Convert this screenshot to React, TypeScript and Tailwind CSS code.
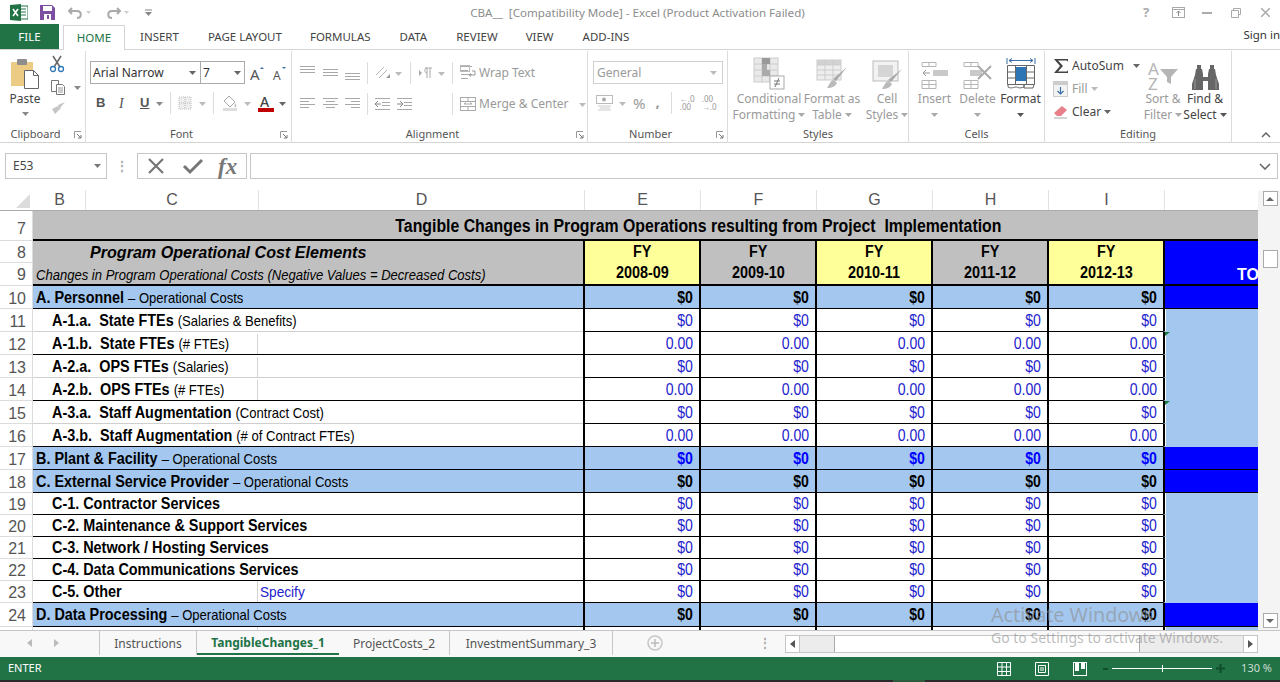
import React from "react";

const ui = "font-['Noto_Sans','Open_Sans',sans-serif]";
const cell = "font-['Liberation_Sans',sans-serif]";

const Caret = ({ c = "#8a8a8a" }: { c?: string }) => (
  <svg width="7" height="4" viewBox="0 0 7 4" className="inline-block shrink-0"><path d="M0 0h7L3.5 4z" fill={c} /></svg>
);
const Launcher = () => (
  <svg width="8" height="8" viewBox="0 0 8 8" className="shrink-0"><path d="M.5 7V.5H7" stroke="#999" fill="none" /><path d="M3 3l4 4M4 7h3V4" stroke="#777" fill="none" /></svg>
);
const Sep = ({ h = "h-[22px]" }: { h?: string }) => <div className={`w-px bg-[#dcdcdc] shrink-0 ${h}`} />;

const Lines = ({ w = 15, rows, c = "#a8a8a8" }: { w?: number; rows: [number, number, number][]; c?: string }) => (
  <svg width={w} height="18" viewBox={`0 0 ${w} 18`} className="shrink-0">
    {rows.map(([x, y, l], i) => <rect key={i} x={x} y={y} width={l} height="1" fill={c} />)}
  </svg>
);

const Group = ({ w, label, launcher, children, border = true }: { w: string; label: string; launcher?: boolean; children: React.ReactNode; border?: boolean }) => (
  <div className={`${w} shrink-0 h-[92px] flex flex-col ${border ? "border-r border-[#dcdcdc]" : ""}`}>
    <div className="h-[75px] flex">{children}</div>
    <div className={`h-[17px] flex items-center relative ${launcher ? "pr-[14px]" : ""}`}>
      <span className="w-full text-center text-[11px] text-[#555]">{label}</span>
      {launcher && <span className="absolute right-[3px] top-[5px]"><Launcher /></span>}
    </div>
  </div>
);

const BigBtn = ({ w, icon, l1, l2, dark }: { w: string; icon: React.ReactNode; l1: string; l2?: string; dark?: boolean }) => (
  <div className={`${w} flex flex-col items-center text-[12px] leading-[16px] ${dark ? "text-[#444]" : "text-[#9a9a9a]"}`}>
    <div className="h-[40px] flex items-end justify-center pb-[1px]">{icon}</div>
    <div className="whitespace-nowrap">{l1}</div>
    {l2 ? <div className="whitespace-nowrap flex items-center gap-[3px]">{l2}<Caret c={dark ? "#555" : "#aaa"} /></div> : <div className="h-[16px] flex items-center"><Caret c={dark ? "#555" : "#aaa"} /></div>}
  </div>
);

const CondIcon = () => (
  <svg width="32" height="33" viewBox="0 0 32 33">
    <rect x="1" y="1" width="24" height="24" fill="#e9e9e9" stroke="#ccc" />
    <path d="M9 1v24M17 1v24M1 7h24M1 13h24M1 19h24" stroke="#ccc" />
    <rect x="9" y="1" width="8" height="6" fill="#999" /><rect x="9" y="7" width="5" height="6" fill="#aaa" /><rect x="9" y="13" width="8" height="6" fill="#aaa" />
    <rect x="17" y="19" width="14" height="13" fill="#fff" stroke="#aaa" />
    <path d="M21 24h6M21 27h6M26 21l-4 9" stroke="#777" fill="none" />
  </svg>
);
const TableIcon = () => (
  <svg width="32" height="31" viewBox="0 0 32 31">
    <rect x="1" y="1" width="24" height="20" fill="#eee" stroke="#ccc" />
    <rect x="1" y="1" width="24" height="5" fill="#d2d2d2" />
    <path d="M9 1v20M17 1v20M1 6h24M1 11h24M1 16h24" stroke="#ccc" />
    <path d="M31 8L20 22l-3-2z" fill="#aaa" /><path d="M18 21c-3 0-4 3-7 8 5 0 9-2 10-5z" fill="#bbb" />
  </svg>
);
const StylesIcon = () => (
  <svg width="31" height="30" viewBox="0 0 31 30">
    <rect x="1" y="1" width="25" height="20" fill="#f2f2f2" stroke="#bbb" />
    <rect x="6" y="5" width="15" height="12" fill="#d5d5d5" />
    <path d="M30 9L19 22l-3-2z" fill="#aaa" /><path d="M17 21c-3 0-4 3-7 8 5 0 9-2 10-5z" fill="#bbb" />
  </svg>
);
const InsertIcon = () => (
  <svg width="28" height="29" viewBox="0 0 28 29" fill="none">
    <path d="M1 1.500h14v4H1zM8 1.500v4M1 19.500h14v8H1zM1 23.500h14M8 19.500v8" stroke="#b5b5b5" />
    <rect x="12" y="9" width="15" height="6" fill="#c9c9c9" />
    <path d="M9 12H2M5 9l-3 3 3 3" stroke="#999" />
  </svg>
);
const DeleteIcon = () => (
  <svg width="30" height="29" viewBox="0 0 30 29" fill="none">
    <path d="M1 1.500h14v4H1zM8 1.500v4M1 19.500h14v8H1zM1 23.500h14M8 19.500v8" stroke="#b5b5b5" />
    <rect x="7" y="9" width="12" height="6" fill="#c9c9c9" />
    <path d="M15 5l13 13M28 5L15 18" stroke="#aaa" strokeWidth="2" />
  </svg>
);
const FormatIcon = () => (
  <svg width="30" height="33" viewBox="0 0 30 33" fill="none">
    <path d="M1 1v6M29 1v6M3 3.500h24M3 3.500l3-2M3 3.500l3 2M27 3.500l-3-2M27 3.500l-3 2" stroke="#3b6fa5" />
    <path d="M1.500 8.500h27v19h-27zM1.500 15h27M1.500 21h27M9.500 8.500v19M20.500 8.500v19" stroke="#666" />
    <rect x="10" y="10" width="10" height="14" fill="#2e75b6" />
    <path d="M2 27v3c3 2 6 0 8 0s3 2 8 0v-3M18 28v3h9l1-4" stroke="#666" />
  </svg>
);
const Binoculars = () => (
  <svg width="27" height="25" viewBox="0 0 27 25">
    <path d="M5 0h4v4h1l1 5v3h5V9l1-5h1V0h4v4h1l1 6 3 9v6H16v-9h-5v9H0v-6l3-9 1-6h1z" fill="#666" />
    <path d="M3 14v10M24 14v10" stroke="#999" />
  </svg>
);

const Ribbon = () => (
  <div className={`h-[93px] flex border-b border-[#d4d4d4] pt-[1px] text-[12px] bg-white relative shrink-0 ${ui}`}>
    <Group w="w-[86px]" label="Clipboard" launcher>
      <div className="w-[50px] flex flex-col items-center pt-[6px] text-[12px] text-[#444]">
        <svg width="30" height="33" viewBox="0 0 30 33">
          <path d="M1 5h22v24H1z" fill="#eccb85" /><rect x="7" y="2" width="10" height="6" rx="1" fill="#8e8e8e" />
          <path d="M14.500 13.500h9l5 5v13h-14z" fill="#fff" stroke="#666" /><path d="M23.500 13.500v5h5" fill="none" stroke="#666" />
        </svg>
        <div className="leading-[16px] mt-[1px]">Paste</div>
        <div className="h-[14px] flex items-center"><Caret /></div>
      </div>
      <div className="flex flex-col pt-[4px] gap-[4px]">
        <svg width="16" height="18" viewBox="0 0 16 18" fill="none" className="ml-[-1px]"><path d="M4 1l7 11M12 1L5 12" stroke="#666" strokeWidth="1.500" /><circle cx="4" cy="14" r="2.500" stroke="#2e75b6" strokeWidth="1.300" /><circle cx="12" cy="14" r="2.500" stroke="#2e75b6" strokeWidth="1.300" /></svg>
        <div className="flex items-center gap-[8px] mt-[2px]">
          <svg width="16" height="17" viewBox="0 0 16 17" fill="none"><path d="M1.500 1.500h7v11h-7z" stroke="#777" /><path d="M6.500 5.500h6l2 2v8h-8z" fill="#fff" stroke="#777" /><path d="M8 9h5M8 11h5M8 13h5" stroke="#999" /></svg>
          <Caret />
        </div>
        <svg width="16" height="14" viewBox="0 0 16 14" className="mt-[1px]"><path d="M15 1L8 4l2 3zM8 5L2 8l3 5 6-6z" fill="#c6c6c6" /></svg>
      </div>
    </Group>

    <Group w="w-[206px]" label="Font" launcher>
      <div className="flex flex-col pl-[4px]">
        <div className="flex items-center mt-[10px] h-[23px]">
          <div className="w-[111px] h-[23px] border border-[#ababab] flex items-center justify-between pl-[2px] pr-[4px] text-[#333] text-[12px]"><span>Arial Narrow</span><Caret c="#666" /></div>
          <div className="w-[44px] h-[23px] border border-[#ababab] border-l-0 flex items-center justify-between pl-[2px] pr-[3px] text-[#333] text-[12px]"><span>7</span><Caret c="#666" /></div>
          <svg width="16" height="16" viewBox="0 0 16 16" className="ml-[5px]"><text x="0" y="15" fontSize="15" fill="#555">A</text><path d="M10 4l2-2 2 2z" fill="#3b6fa5" /></svg>
          <svg width="16" height="16" viewBox="0 0 16 16" className="ml-[6px]"><text x="1" y="15" fontSize="12" fill="#555">A</text><path d="M10 2l2 2 2-2z" fill="#3b6fa5" /></svg>
        </div>
        <div className="flex items-center mt-[8px] h-[22px] text-[#555]">
          <span className="w-[12px] ml-[6px] text-[13px] font-bold font-['Liberation_Sans']">B</span>
          <span className="w-[12px] ml-[11px] text-[14px] italic font-['Liberation_Serif']">I</span>
          <span className="w-[12px] ml-[9px] text-[13px] font-bold underline font-['Liberation_Sans']">U</span>
          <span className="ml-[4px]"><Caret /></span>
          <span className="ml-[7px]"><Sep /></span>
          <svg width="14" height="14" viewBox="0 0 14 14" className="ml-[7px]"><rect x="1" y="1" width="12" height="12" fill="#eee" stroke="#bbb" strokeDasharray="1 1" /><path d="M7 1v12M1 7h12" stroke="#bbb" strokeDasharray="1 1" /></svg>
          <span className="ml-[7px]"><Caret c="#bbb" /></span>
          <span className="ml-[7px]"><Sep /></span>
          <svg width="16" height="17" viewBox="0 0 16 17" className="ml-[8px]" fill="none"><path d="M7 1l6 6-5 5-6-6z" stroke="#aaa" /><path d="M13 8c1 2 2 3 1 4s-2-1-1-4z" fill="#bbb" /><rect x="1" y="13" width="14" height="3" fill="#ddd" /></svg>
          <span className="ml-[6px]"><Caret c="#bbb" /></span>
          <svg width="16" height="17" viewBox="0 0 16 17" className="ml-[7px]"><text x="2" y="12" fontSize="14" fill="#444" fontWeight="500">A</text><rect x="0" y="13" width="16" height="4" fill="#c00000" /></svg>
          <span className="ml-[5px]"><Caret c="#666" /></span>
        </div>
      </div>
    </Group>

    <Group w="w-[296px]" label="Alignment" launcher>
      <div className="flex flex-col pl-[8px] text-[#9a9a9a]">
        <div className="flex items-center mt-[11px] h-[22px]">
          <Lines rows={[[0, 2, 15], [0, 5, 15], [0, 8, 15]]} />
          <span className="ml-[8px]"><Lines rows={[[0, 5, 15], [0, 8, 15], [0, 11, 15]]} /></span>
          <span className="ml-[7px]"><Lines rows={[[0, 9, 15], [0, 12, 15], [0, 15, 15]]} /></span>
          <span className="ml-[7px]"><Sep /></span>
          <svg width="16" height="16" viewBox="0 0 16 16" className="ml-[7px]" fill="none"><path d="M1 10L9 2M4 13l8-8" stroke="#b5b5b5" /><path d="M11 13l4-4v4z" fill="#999" /></svg>
          <span className="ml-[4px]"><Caret c="#bbb" /></span>
          <span className="ml-[8px]"><Sep /></span>
          <svg width="14" height="14" viewBox="0 0 14 14" className="ml-[8px]"><path d="M0 4l3 3-3 3z" fill="#aaa" /><path d="M6 2h7M8 2c-3 0-3 5 0 5M8 2v10M11 2v10" stroke="#aaa" fill="none" /></svg>
          <span className="ml-[5px]"><Caret c="#bbb" /></span>
          <span className="ml-[7px]"><Sep /></span>
          <svg width="16" height="16" viewBox="0 0 16 16" className="ml-[7px]" fill="none"><path d="M1 1.500h11M1 5.500h7M1 9.500h11M1 13.500h7" stroke="#aaa" /><rect x=".5" y=".5" width="9" height="6" stroke="#bbb" /><path d="M12 6h3v4h-5M11 8.500l-2 1.500 2 1.500" stroke="#999" /></svg>
          <span className="ml-[3px] text-[12px]">Wrap Text</span>
        </div>
        <div className="flex items-center mt-[9px] h-[22px]">
          <Lines rows={[[0, 3, 15], [0, 6, 9], [0, 9, 15], [0, 12, 9]]} />
          <span className="ml-[8px]"><Lines rows={[[0, 3, 15], [3, 6, 9], [0, 9, 15], [3, 12, 9]]} /></span>
          <span className="ml-[7px]"><Lines rows={[[0, 3, 15], [6, 6, 9], [0, 9, 15], [6, 12, 9]]} /></span>
          <span className="ml-[7px]"><Sep /></span>
          <svg width="15" height="14" viewBox="0 0 15 14" className="ml-[7px]" fill="none"><path d="M0 1.500h15M7 5.500h8M7 8.500h8M0 12.500h15" stroke="#aaa" /><path d="M6 7H0M3 4L0 7l3 3" stroke="#888" /></svg>
          <svg width="15" height="14" viewBox="0 0 15 14" className="ml-[7px]" fill="none"><path d="M0 1.500h15M7 5.500h8M7 8.500h8M0 12.500h15" stroke="#aaa" /><path d="M0 7h6M3 4l3 3-3 3" stroke="#888" /></svg>
          <span className="ml-[40px]"><Sep /></span>
          <svg width="16" height="14" viewBox="0 0 16 14" className="ml-[7px]" fill="none"><rect x=".5" y=".5" width="15" height="13" stroke="#aaa" /><path d="M.5 4.500h15M.5 9.500h15M8 .5v4M8 9.500v4M4 7h8M4 7l2-1.500M12 7l-2-1.500" stroke="#aaa" /></svg>
          <span className="ml-[3px] text-[12px] whitespace-nowrap">Merge &amp; Center</span>
          <span className="ml-[10px]"><Caret c="#bbb" /></span>
        </div>
      </div>
    </Group>

    <Group w="w-[140px]" label="Number" launcher>
      <div className="flex flex-col pl-[5px] text-[#9a9a9a]">
        <div className="w-[130px] h-[23px] mt-[10px] border border-[#d0d0d0] flex items-center justify-between pl-[3px] pr-[5px] text-[12px]"><span>General</span><Caret c="#bbb" /></div>
        <div className="flex items-center h-[22px] mt-[8px]">
          <svg width="18" height="16" viewBox="0 0 18 16" className="ml-[3px]" fill="none"><rect x=".5" y=".5" width="16" height="8" stroke="#bbb" /><circle cx="8" cy="4.500" r="2" fill="#aaa" /><path d="M2 11h13M4 13h10M2 15h13" stroke="#ccc" /></svg>
          <span className="ml-[5px]"><Caret c="#bbb" /></span>
          <span className="ml-[7px] text-[15px] leading-none">%</span>
          <span className="ml-[10px] text-[15px] font-bold leading-none mt-[-4px]">,</span>
          <span className="ml-[11px]"><Sep /></span>
          <span className="ml-[8px] text-[8px] leading-[8px] w-[17px] text-[#999]">←.0<br />.00</span>
          <span className="ml-[5px] text-[8px] leading-[8px] w-[17px] text-[#999]">.00<br />→.0</span>
        </div>
      </div>
    </Group>

    <Group w="w-[181px]" label="Styles">
      <div className="w-[12px]" />
      <BigBtn w="w-[58px]" icon={<CondIcon />} l1="Conditional" l2="Formatting" />
      <BigBtn w="w-[68px]" icon={<TableIcon />} l1="Format as" l2="Table" />
      <BigBtn w="w-[42px]" icon={<StylesIcon />} l1="Cell" l2="Styles" />
    </Group>

    <Group w="w-[136px]" label="Cells">
      <div className="w-[4px]" />
      <BigBtn w="w-[43px]" icon={<InsertIcon />} l1="Insert" />
      <BigBtn w="w-[43px]" icon={<DeleteIcon />} l1="Delete" />
      <BigBtn w="w-[43px]" icon={<FormatIcon />} l1="Format" dark />
    </Group>

    <Group w="w-[187px]" label="Editing">
      <div className="w-[100px] flex flex-col pl-[8px] pt-[3px] text-[12px]">
        <div className="h-[23px] flex items-center text-[#444]">
          <svg width="16" height="16" viewBox="0 0 16 16"><path d="M1 1h14v3l-1-1.500H5l5 5.500-5 5.500h9L15 12v3H1l6-7z" fill="#444" /></svg>
          <span className="ml-[3px]">AutoSum</span><span className="ml-[9px]"><Caret c="#666" /></span>
        </div>
        <div className="h-[23px] flex items-center text-[#9a9a9a]">
          <svg width="15" height="16" viewBox="0 0 15 16" fill="none"><rect x=".5" y=".5" width="14" height="15" fill="#f3f3f3" stroke="#ccc" /><rect x="1" y="1" width="13" height="3" fill="#ccc" /><path d="M7.500 6v7M4.500 10l3 3 3-3" stroke="#3b6fa5" strokeWidth="1.200" /></svg>
          <span className="ml-[4px]">Fill</span><span className="ml-[3px]"><Caret c="#bbb" /></span>
        </div>
        <div className="h-[23px] flex items-center text-[#444]">
          <svg width="15" height="14" viewBox="0 0 15 14"><path d="M9 1l5 4-6 6H4L1 8z" fill="#e8808a" /><path d="M1 13h13" stroke="#aaa" /></svg>
          <span className="ml-[4px]">Clear</span><span className="ml-[3px]"><Caret c="#666" /></span>
        </div>
      </div>
      <BigBtn w="w-[36px]" icon={
        <svg width="31" height="28" viewBox="0 0 31 28"><text x="0" y="13" fontSize="17" fill="#b5b5b5">A</text><text x="0" y="28" fontSize="17" fill="#b5b5b5">Z</text><path d="M12 7h18l-7 8v7l-4-2v-5z" fill="#b5b5b5" /></svg>
      } l1="Sort &" l2="Filter" />
      <div className="w-[3px]" />
      <BigBtn w="w-[42px]" icon={<Binoculars />} l1="Find &" l2="Select" dark />
    </Group>
    <div className="flex-1 relative">
      <svg width="10" height="6" viewBox="0 0 10 6" className="absolute left-[29px] top-[81px]" fill="none"><path d="M1 5l4-4 4 4" stroke="#666" strokeWidth="1.500" /></svg>
    </div>
  </div>
);

const colW = ["w-[52px]", "w-[173px]", "w-[326px]"];
const letters: [string, string][] = [["E", "w-[116px]"], ["F", "w-[116px]"], ["G", "w-[116px]"], ["H", "w-[116px]"], ["I", "w-[116px]"]];

const RowNum = ({ n, h, pt = "pt-[3px]" }: { n: number; h: string; pt?: string }) => (
  <div className={`w-[33px] shrink-0 ${h} ${pt} flex items-center justify-end pr-[6px] border-b border-r border-[#dcdcdc] text-[#555] text-[16px] ${cell} bg-white`}>{n}</div>
);

type R = { n: number; h: string; sec?: boolean; label: React.ReactNode; val: string; bold?: boolean; vc?: string; divide?: boolean; blueJ?: boolean; light?: boolean; tick?: boolean; extra?: React.ReactNode };

const Sec = ({ a, b }: { a: string; b: string }) => (
  <span className="ml-[3px] inline-block origin-left scale-x-[.9] whitespace-pre"><b className="text-[16px]">{a}</b> <span className="text-[14.500px]">– {b}</span></span>
);
const Item = ({ a, b }: { a: string; b?: string }) => (
  <span className="ml-[19px] inline-block origin-left scale-x-[.9] whitespace-pre"><b className="text-[16px]">{a}</b> <span className="text-[14.500px]">{b}</span></span>
);

const rows: R[] = [
  { n: 10, h: "h-[23px]", sec: true, label: <Sec a="A. Personnel" b="Operational Costs" />, val: "$0", bold: true, blueJ: true },
  { n: 11, h: "h-[23px]", light: true, label: <Item a="A-1.a.  State FTEs" b="(Salaries & Benefits)" />, val: "$0" },
  { n: 12, h: "h-[23px]", divide: true, tick: true, label: <Item a="A-1.b.  State FTEs" b="(# FTEs)" />, val: "0.00" },
  { n: 13, h: "h-[23px]", light: true, divide: true, label: <Item a="A-2.a.  OPS FTEs" b="(Salaries)" />, val: "$0" },
  { n: 14, h: "h-[23px]", divide: true, label: <Item a="A-2.b.  OPS FTEs" b="(# FTEs)" />, val: "0.00" },
  { n: 15, h: "h-[23px]", light: true, tick: true, label: <Item a="A-3.a.  Staff Augmentation" b="(Contract Cost)" />, val: "$0" },
  { n: 16, h: "h-[23px]", label: <Item a="A-3.b.  Staff Augmentation" b="(# of Contract FTEs)" />, val: "0.00" },
  { n: 17, h: "h-[23px]", sec: true, label: <Sec a="B. Plant & Facility" b="Operational Costs" />, val: "$0", bold: true, vc: "text-[#0000ff]", blueJ: true },
  { n: 18, h: "h-[23px]", sec: true, label: <Sec a="C. External Service Provider" b="Operational Costs" />, val: "$0", bold: true, blueJ: true },
  { n: 19, h: "h-[22px]", label: <Item a="C-1. Contractor Services" />, val: "$0" },
  { n: 20, h: "h-[22px]", label: <Item a="C-2. Maintenance & Support Services" />, val: "$0" },
  { n: 21, h: "h-[22px]", label: <Item a="C-3. Network / Hosting Services" />, val: "$0" },
  { n: 22, h: "h-[22px]", label: <Item a="C-4. Data Communications Services" />, val: "$0" },
  { n: 23, h: "h-[22px]", divide: true, label: <Item a="C-5. Other" />, extra: <span className="ml-[2px] inline-block origin-left scale-x-[.88] text-[15.500px] text-[#2222cc]">Specify</span>, val: "$0" },
  { n: 24, h: "h-[24px]", sec: true, label: <Sec a="D. Data Processing" b="Operational Costs" />, val: "$0", bold: true, blueJ: true },
  { n: 25, h: "h-[24px]", divide: true, label: "", val: "" },
];

const SheetRow = ({ r }: { r: R }) => {
  const bg = r.sec ? "bg-[#a3c7ee]" : "bg-white";
  const bb = r.light ? "border-b border-[#cfcfcf]" : "border-b border-black";
  const shift = r.n < 19 ? "pt-[2px]" : "";
  return (
    <div className={`flex ${r.h} ${cell}`}>
      <RowNum n={r.n} h={r.h} pt={r.n < 19 ? "pt-[3px]" : "pt-[2px]"} />
      <div className={`w-[550px] shrink-0 flex items-center ${shift} ${bg} ${bb} text-black whitespace-nowrap overflow-hidden`}>
        {r.divide ? (
          <>
            <div className="w-[225px] shrink-0 h-full flex items-center border-r border-[#d4d4d4]">{r.label}</div>
            <div className="flex-1 h-full flex items-center">{r.extra}</div>
          </>
        ) : r.label}
      </div>
      {[0, 1, 2, 3, 4].map((i) => (
        <div key={i} className={`w-[116px] shrink-0 flex items-center justify-end pr-[6px] ${shift} border-l-2 border-black ${bg} ${bb} text-[16px] ${r.bold ? "font-bold" : ""} ${r.vc ?? (r.bold ? "text-black" : "text-[#2222cc]")}`}>
          <span className="inline-block origin-right scale-x-[.88]">{r.val}</span>
        </div>
      ))}
      <div className={`w-[95px] shrink-0 border-l-2 border-black relative ${r.blueJ ? "bg-[#0000ff] border-b border-b-black" : "bg-[#a3c7ee] border-b border-b-[#a3c7ee] shadow-[inset_1px_0_0_#fff]"}`}>
        {r.tick && <svg width="6" height="6" viewBox="0 0 6 6" className="absolute left-0 top-0"><path d="M0 0h5L0 4z" fill="#1a7a3a" /></svg>}
      </div>
    </div>
  );
};

const Sheet = () => (
  <div className="h-[419px] overflow-hidden flex-1 min-w-0">
    <div className={`flex h-[30px] ${cell}`}>
      <RowNum n={7} h="h-[30px]" pt="pt-[6px]" />
      <div className="flex-1 h-[30px] pt-[3px] bg-[#c0c0c0] border-b-2 border-black flex items-center justify-center pl-[106px] font-bold text-[18px] text-black whitespace-nowrap">
        <span className="inline-block scale-x-[.88]">Tangible Changes in Program Operations resulting from Project&nbsp; Implementation</span>
      </div>
    </div>
    <div className={`flex h-[45px] ${cell}`}>
      <div className="w-[33px] shrink-0 flex flex-col">
        <RowNum n={8} h="h-[22px]" pt="pt-[2px]" />
        <RowNum n={9} h="h-[23px]" pt="pt-[2px]" />
      </div>
      <div className="w-[550px] shrink-0 bg-[#c0c0c0] border-b-2 border-black flex flex-col">
        <div className="h-[23px] pl-[57px] flex items-center font-bold italic text-[16.100px] text-black whitespace-nowrap">Program Operational Cost Elements</div>
        <div className="h-[20px] pl-[3px] pt-[3px] flex items-center text-[14.500px] text-black whitespace-nowrap">
          <span className="inline-block origin-left scale-x-[.9] italic">Changes in Program Operational Costs (Negative Values = Decreased Costs)</span>
        </div>
      </div>
      {["2008-09", "2009-10", "2010-11", "2011-12", "2012-13"].map((y, i) => (
        <div key={y} className={`w-[116px] shrink-0 border-l-2 border-b-2 border-black flex flex-col items-center font-bold text-[16px] text-black ${i % 2 ? "bg-[#c0c0c0]" : "bg-[#ffff99]"}`}>
          <div className="h-[21px] flex items-center"><span className="inline-block scale-x-[.9]">FY</span></div>
          <div className="h-[22px] flex items-center"><span className="inline-block scale-x-[.9]">{y}</span></div>
        </div>
      ))}
      <div className="w-[95px] shrink-0 border-l-2 border-b-2 border-black bg-[#0000ff] overflow-hidden flex items-end pl-[72px] text-white font-bold text-[16px] leading-[19px] whitespace-nowrap">TOTAL</div>
    </div>
    {rows.map((r) => <SheetRow key={r.n} r={r} />)}
  </div>
);

const ScrollBtn = ({ d }: { d: string }) => (
  <div className="w-[15px] h-[15px] border border-[#ababab] bg-white flex items-center justify-center shrink-0">
    <svg width="8" height="8" viewBox="0 0 8 8"><path d={d} fill="#666" /></svg>
  </div>
);

const Tab = ({ w, label, active }: { w: string; label: string; active?: boolean }) => (
  <div className={`${w} h-[24px] pt-[1px] flex items-center justify-center text-[12px] shrink-0 ${active ? "border-b-2 border-[#217346] font-bold text-[#217346]" : "border-r border-[#c6c6c6] text-[#555]"}`}>{label}</div>
);

export default function App() {
  return (
    <div className={`w-[1280px] h-[682px] overflow-hidden flex flex-col bg-white relative ${ui}`}>
      {/* Title bar */}
      <div className="h-[25px] flex items-center relative shrink-0">
        <svg width="18" height="17" viewBox="0 0 18 17" className="ml-[10px]"><rect x="8" y="2" width="10" height="13" fill="#fff" stroke="#217346" /><path d="M11 5h5M11 8h5M11 11h5" stroke="#217346" /><path d="M0 1l11-1v17L0 16z" fill="#217346" /><path d="M3 5l5 7M8 5l-5 7" stroke="#fff" strokeWidth="1.600" /></svg>
        <svg width="15" height="15" viewBox="0 0 15 15" className="ml-[12px]"><path d="M0 0h12l3 3v12H0z" fill="#7c4fa3" /><rect x="3" y="1" width="9" height="5" fill="#fff" /><rect x="4" y="9" width="7" height="6" fill="#fff" /><rect x="7" y="10" width="2" height="4" fill="#7c4fa3" /></svg>
        <svg width="15" height="12" viewBox="0 0 15 12" className="ml-[13px]" fill="none"><path d="M4 1L1 4l3 3" stroke="#aaa" strokeWidth="2" /><path d="M1 4h8c5 0 5 7 0 7" stroke="#aaa" strokeWidth="2" /></svg>
        <span className="ml-[3px]"><svg width="5" height="3" viewBox="0 0 5 3"><path d="M0 0h5L2.500 3z" fill="#ccc" /></svg></span>
        <svg width="15" height="12" viewBox="0 0 15 12" className="ml-[15px]" fill="none"><path d="M11 1l3 3-3 3" stroke="#aaa" strokeWidth="2" /><path d="M14 4H6c-5 0-5 7 0 7" stroke="#aaa" strokeWidth="2" /></svg>
        <span className="ml-[3px]"><svg width="5" height="3" viewBox="0 0 5 3"><path d="M0 0h5L2.500 3z" fill="#ccc" /></svg></span>
        <svg width="7" height="7" viewBox="0 0 7 7" className="ml-[16px]"><path d="M0 1h7" stroke="#888" /><path d="M0 3h7L3.500 7z" fill="#888" /></svg>
        <div className="flex-1 text-center text-[11.600px] text-[#8c8c8c] pr-[20px] whitespace-nowrap">CBA__&nbsp; [Compatibility Mode] - Excel (Product Activation Failed)</div>
        <div className="flex items-center text-[#aaa] pr-[8px]">
          <span className="text-[13px] font-bold w-[12px] mr-[17px]">?</span>
          <svg width="13" height="11" viewBox="0 0 13 11" className="mr-[17px]" fill="none"><rect x=".5" y=".5" width="12" height="10" stroke="#aaa" /><path d="M1 2.500h11" stroke="#aaa" /><path d="M6.500 9V4.500M4.500 6l2-2 2 2" stroke="#888" /></svg>
          <svg width="10" height="3" viewBox="0 0 10 3" className="mr-[19px]"><rect width="10" height="2" y="1" fill="#aaa" /></svg>
          <svg width="10" height="10" viewBox="0 0 10 10" className="mr-[20px]" fill="none"><path d="M2.500 2.500v-2h7v6h-2M.5 2.500h7v7h-7z" stroke="#aaa" /></svg>
          <svg width="9" height="9" viewBox="0 0 9 9" className="mr-[2px]" fill="none"><path d="M0 0l9 9M9 0L0 9" stroke="#aaa" strokeWidth="1.500" /></svg>
        </div>
      </div>
      {/* Tabs */}
      <div className="h-[25px] flex items-end border-b border-[#d4d4d4] shrink-0 text-[11.500px] text-[#444] relative">
        <div className="w-[59px] h-[25px] bg-[#217346] text-white flex items-center justify-center">FILE</div>
        <div className="w-[62px] h-[25px] ml-[4px] border border-b-0 border-[#d4d4d4] bg-white text-[#217346] flex items-center justify-center mb-[-1px]">HOME</div>
        <div className="h-[24px] flex items-center"><span className="ml-[15px]">INSERT</span><span className="ml-[29px]">PAGE LAYOUT</span><span className="ml-[28px]">FORMULAS</span><span className="ml-[29px]">DATA</span><span className="ml-[29px]">REVIEW</span><span className="ml-[28px]">VIEW</span><span className="ml-[29px]">ADD-INS</span></div>
        <div className="flex-1" />
        <div className="h-[24px] flex items-start pt-[1px] text-[#333]">Sign in</div>
      </div>
      <Ribbon />
      {/* Formula bar */}
      <div className="h-[47px] flex pt-[10px] shrink-0 bg-white">
        <div className="w-[102px] h-[26px] ml-[5px] border border-[#c6c6c6] flex items-center justify-between pl-[7px] pr-[5px] text-[12px] text-[#444]"><span>E53</span><Caret c="#777" /></div>
        <div className="w-[30px] flex items-center justify-center text-[#aaa] text-[12px] font-bold h-[26px]">⋮</div>
        <div className="w-[110px] h-[26px] border border-[#c6c6c6] flex items-center pl-[9px]">
          <svg width="18" height="18" viewBox="0 0 18 18" fill="none"><path d="M2 2l14 14M16 2L2 16" stroke="#777" strokeWidth="2.200" /></svg>
          <svg width="22" height="18" viewBox="0 0 22 18" className="ml-[17px]" fill="none"><path d="M2 9l6 6L20 3" stroke="#777" strokeWidth="3" /></svg>
          <span className="ml-[14px] font-['Liberation_Serif'] italic font-bold text-[23px] text-[#777] leading-none">fx</span>
        </div>
        <div className="w-[1028px] h-[26px] ml-[3px] border border-[#c6c6c6] flex items-center justify-end pr-[6px]">
          <svg width="12" height="7" viewBox="0 0 12 7" fill="none"><path d="M1 1l5 5 5-5" stroke="#666" strokeWidth="1.600" /></svg>
        </div>
      </div>
      {/* Column headers */}
      <div className={`h-[21px] flex shrink-0 border-b border-[#ababab] text-[16px] text-[#555] ${cell}`}>
        <div className="w-[34px] shrink-0 flex items-end justify-end pr-[4px] pb-[2px]"><svg width="14" height="14" viewBox="0 0 14 14"><path d="M14 0v14H0z" fill="#dcdcdc" /></svg></div>
        {["B", "C", "D"].map((c, i) => <div key={c} className={`${colW[i]} shrink-0 border-r border-[#e2e2e2] flex items-center justify-center`}>{c}</div>)}
        {letters.map(([c, w]) => <div key={c} className={`${w} shrink-0 border-r border-[#e2e2e2] flex items-center justify-center`}>{c}</div>)}
        <div className="flex-1" />
        <div className="w-[22px] shrink-0 bg-[#f8f8f8]" />
      </div>
      {/* Sheet + vertical scrollbar */}
      <div className="flex h-[419px] shrink-0">
        <Sheet />
        <div className="w-[22px] shrink-0 bg-[#f4f4f4] flex flex-col items-center pl-[2px] mt-[-20px] h-[439px]">
          <ScrollBtn d="M0 6l4-4 4 4z" />
          <div className="w-[15px] h-[18px] mt-[44px] border border-[#ababab] bg-white" />
          <div className="flex-1" />
          <ScrollBtn d="M0 2l4 4 4-4z" />
          <div className="h-[2px]" />
        </div>
      </div>
      {/* Sheet tabs */}
      <div className="h-[27px] flex items-start shrink-0 border-t border-[#c6c6c6] bg-[#f8f8f8]">
        <div className="w-[100px] h-[24px] border-r border-[#c6c6c6] flex items-center pl-[27px] gap-[22px] shrink-0">
          <svg width="5" height="8" viewBox="0 0 5 8"><path d="M5 0v8L0 4z" fill="#bbb" /></svg>
          <svg width="5" height="8" viewBox="0 0 5 8"><path d="M0 0v8l5-4z" fill="#bbb" /></svg>
        </div>
        <Tab w="w-[97px]" label="Instructions" />
        <Tab w="w-[142px]" label="TangibleChanges_1" active />
        <Tab w="w-[111px]" label="ProjectCosts_2" />
        <Tab w="w-[163px]" label="InvestmentSummary_3" />
        <div className="w-[34px] shrink-0" />
        <svg width="16" height="16" viewBox="0 0 16 16" className="mt-[4px] shrink-0" fill="none"><circle cx="8" cy="8" r="7" stroke="#c6c6c6" strokeWidth="1.500" /><path d="M8 4v8M4 8h8" stroke="#bbb" strokeWidth="1.500" /></svg>
        <div className="w-[122px] shrink-0 h-[24px] flex items-center justify-end pr-[14px] text-[#aaa] text-[12px] font-bold">⋮</div>
        <div className="w-[473px] h-[18px] mt-[4px] flex bg-[#ececec] border border-[#c6c6c6] shrink-0">
          <div className="w-[14px] border-r border-[#c6c6c6] bg-white flex items-center justify-center"><svg width="5" height="8" viewBox="0 0 5 8"><path d="M5 0v8L0 4z" fill="#555" /></svg></div>
          <div className="w-[34px]" />
          <div className="w-[306px] bg-white border-x border-[#ababab]" />
          <div className="flex-1" />
          <div className="w-[14px] border-l border-[#c6c6c6] bg-white flex items-center justify-center"><svg width="5" height="8" viewBox="0 0 5 8"><path d="M0 0v8l5-4z" fill="#555" /></svg></div>
        </div>
      </div>
      {/* Status bar */}
      <div className="h-[23px] bg-[#217346] text-white flex items-center shrink-0 text-[11px]">
        <span className="ml-[8px]">ENTER</span>
        <div className="flex-1" />
        <svg width="14" height="14" viewBox="0 0 14 14" fill="none"><path d="M.5.500h13v13H.5zM.5 5h13M.5 9.500h13M5 .5v13M9.500.5v13" stroke="#fff" /></svg>
        <svg width="14" height="14" viewBox="0 0 14 14" className="ml-[24px]" fill="none"><path d="M.5.500h13v13H.5z" stroke="#fff" /><path d="M3.500 3.500h7v7h-7zM5 6h4M5 8h4" stroke="#fff" /></svg>
        <svg width="14" height="14" viewBox="0 0 14 14" className="ml-[24px]"><rect x=".5" y=".5" width="13" height="13" fill="none" stroke="#fff" /><path d="M2 1h4v8H2zM8 1h4v6H8z" fill="#fff" /></svg>
        <span className="ml-[16px] w-[5px] h-[2px] bg-[#0f4d2c]" />
        <div className="ml-[4px] w-[100px] h-[1px] bg-white relative"><span className="absolute left-[50px] top-[-3px] w-px h-[7px] bg-white" /></div>
        <svg width="9" height="9" viewBox="0 0 9 9" className="ml-[4px]"><path d="M4.500 0v9M0 4.500h9" stroke="#0f4d2c" strokeWidth="2" /></svg>
        <span className="ml-[16px] mr-[8px] text-[11px] text-[#c9dcd0]">130 %</span>
      </div>
      <div className="flex-1 flex bg-[#2a2a2a]"><div className="ml-[893px] w-[32px] bg-[#2e5a3e]" /></div>
      {/* Activation watermark */}
      <div className="absolute left-[991px] top-[602px] text-[#8f8f8f]/60 whitespace-nowrap pointer-events-none">
        <div className="text-[19.700px] leading-[26px]">Activate Windows</div>
        <div className="text-[14px] leading-[20px]">Go to Settings to activate Windows.</div>
      </div>
    </div>
  );
}
